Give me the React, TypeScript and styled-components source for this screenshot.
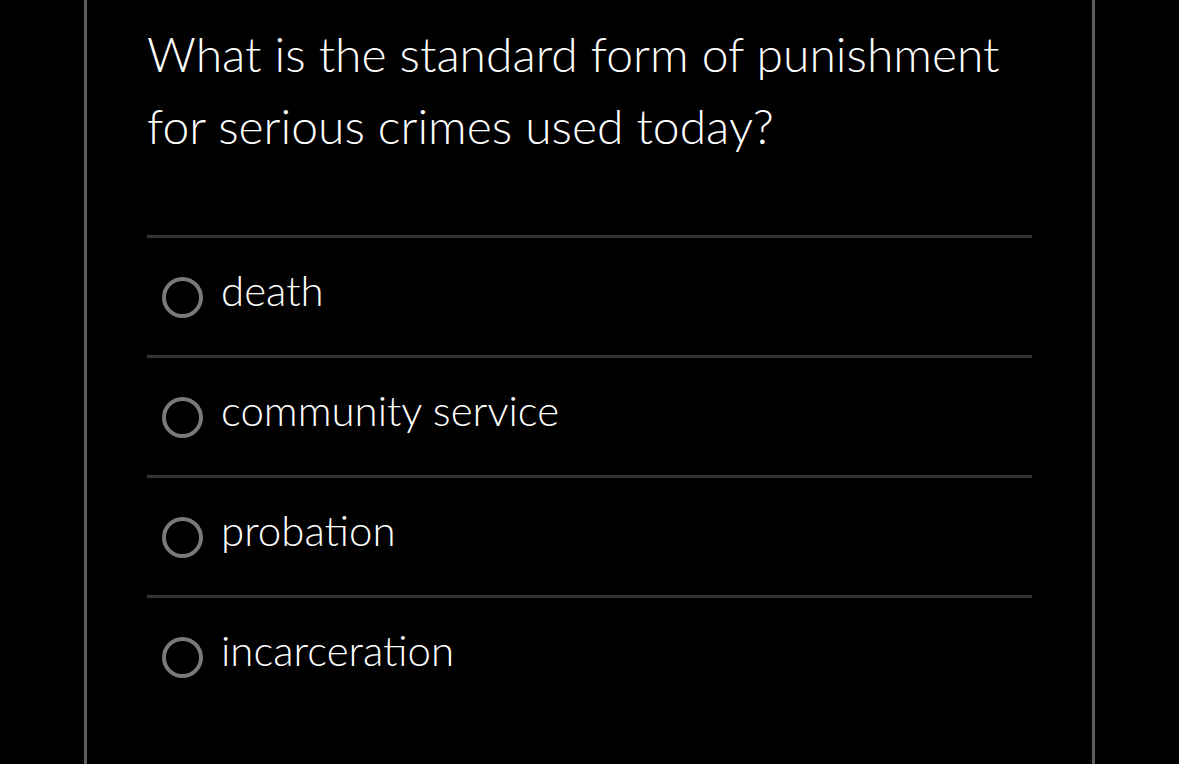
import React from 'react';
import styled, { createGlobalStyle } from 'styled-components';

const GlobalStyle = createGlobalStyle`
  html, body {
    margin: 0;
    padding: 0;
    background: #000;
  }
  body {
    font-family: "Lato Light", Lato, "Open Sans", sans-serif;
    color: #fff;
  }
`;

const Page = styled.div`
  min-height: 764px;
  background: #000;
  padding-left: 84px;
  width: 1179px;
  box-sizing: border-box;
  overflow: hidden;
`;

const Panel = styled.div`
  width: 1011px;
  min-height: 764px;
  box-sizing: border-box;
  border-left: 3px solid #5c5c5c;
  border-right: 3px solid #5c5c5c;
  padding: 18px 60px 0 60px;
`;

const Question = styled.h1`
  margin: 0 0 73px 0;
  font-weight: 300;
  font-size: 48px;
  line-height: 72px;
  letter-spacing: 0;
`;

const Options = styled.div`
  display: flex;
  flex-direction: column;
`;

const Row = styled.label`
  display: flex;
  align-items: center;
  gap: 18px;
  height: 120px;
  box-sizing: border-box;
  border-top: 3px solid #333;
  padding: 1px 0 0 15px;
  cursor: pointer;
`;

const Radio = styled.span`
  width: 41px;
  height: 41px;
  box-sizing: border-box;
  border-radius: 50%;
  border: 4px solid #79797d;
  flex-shrink: 0;
`;

const Label = styled.span`
  font-weight: 300;
  font-size: 42px;
  line-height: 1;
  margin-bottom: 14px;
`;

const answers = ['death', 'community service', 'probation', 'incarceration'];

const App = (): JSX.Element => (
  <>
    <GlobalStyle />
    <Page>
      <Panel>
        <Question>
          What is the standard form of punishment
          <br />
          for serious crimes used today?
        </Question>
        <Options>
          {answers.map((a) => (
            <Row key={a}>
              <Radio />
              <Label>{a}</Label>
            </Row>
          ))}
        </Options>
      </Panel>
    </Page>
  </>
);

export default App;
